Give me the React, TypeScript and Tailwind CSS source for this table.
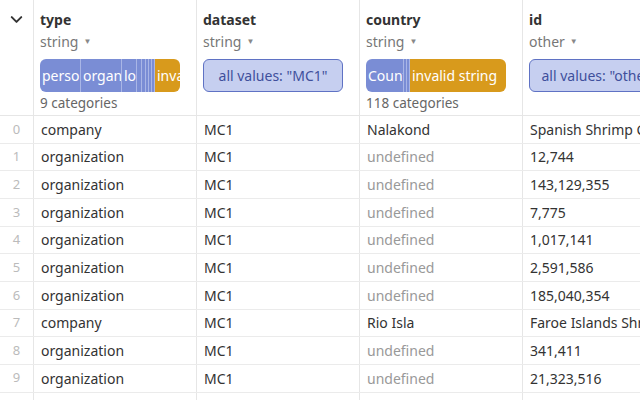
import { ChevronDown } from "lucide-react";

type Seg = { label: string; w: number; kind: "cat" | "invalid" | "slice" };

const columns: {
  name: string;
  type: string;
  summary: "bar" | "single";
  segs?: Seg[];
  single?: string;
  foot?: string;
}[] = [
  {
    name: "type",
    type: "string",
    summary: "bar",
    segs: [
      { label: "person", w: 41, kind: "cat" },
      { label: "organization", w: 41, kind: "cat" },
      { label: "location", w: 15, kind: "cat" },
      { label: "", w: 5, kind: "slice" },
      { label: "", w: 4, kind: "slice" },
      { label: "", w: 3, kind: "slice" },
      { label: "", w: 3, kind: "slice" },
      { label: "", w: 3, kind: "slice" },
      { label: "invalid", w: 25, kind: "invalid" },
    ],
    foot: "9 categories",
  },
  { name: "dataset", type: "string", summary: "single", single: 'all values: "MC1"' },
  {
    name: "country",
    type: "string",
    summary: "bar",
    segs: [
      { label: "Country", w: 38, kind: "cat" },
      { label: "", w: 3, kind: "slice" },
      { label: "", w: 3, kind: "slice" },
      { label: "invalid string", w: 96, kind: "invalid" },
    ],
    foot: "118 categories",
  },
  { name: "id", type: "other", summary: "single", single: 'all values: "other"' },
];

const rows: [string, string, string | null, string][] = [
  ["company", "MC1", "Nalakond", "Spanish Shrimp Carriers"],
  ["organization", "MC1", null, "12,744"],
  ["organization", "MC1", null, "143,129,355"],
  ["organization", "MC1", null, "7,775"],
  ["organization", "MC1", null, "1,017,141"],
  ["organization", "MC1", null, "2,591,586"],
  ["organization", "MC1", null, "185,040,354"],
  ["company", "MC1", "Rio Isla", "Faroe Islands Shrimp"],
  ["organization", "MC1", null, "341,411"],
  ["organization", "MC1", null, "21,323,516"],
  ["organization", "MC1", null, "3,102"],
];

function Bar({ segs }: { segs: Seg[] }) {
  return (
    <div className="flex h-[33px] w-[140px] overflow-hidden rounded-[6px]">
      {segs.map((s, i) => (
        <div
          key={i}
          style={{ width: s.w }}
          className={
            "flex shrink-0 items-center overflow-hidden whitespace-nowrap border-r border-[#a9b6e6] pl-[2px] text-[14px] text-white last:border-r-0 " +
            (s.kind === "invalid" ? "bg-[#d89a1c]" : "bg-[#7a8dd5]")
          }
        >
          {s.label}
        </div>
      ))}
    </div>
  );
}

export default function App() {
  return (
    <div
      className="h-[400px] w-[640px] overflow-hidden bg-white text-[14px] text-[#333]"
      style={{ fontFamily: '"Noto Sans", "Open Sans", sans-serif' }}
    >
      <div className="flex h-[116px] border-b border-[#e6e6e6]">
        <div className="flex w-[34px] shrink-0 justify-center border-r border-[#e6e6e6] pt-[10px]">
          <ChevronDown size={19} strokeWidth={2.5} className="text-[#333]" />
        </div>
        {columns.map((c) => (
          <div
            key={c.name}
            className="w-[163px] shrink-0 border-r border-[#e6e6e6] px-[6px] pt-[9px]"
          >
            <div className="h-[21px] font-bold leading-[21px]">{c.name}</div>
            <div className="flex h-[22px] items-center gap-[5px] text-[#777]">
              {c.type}
              <span className="text-[8px] text-[#888]">▼</span>
            </div>
            <div className="mt-[7px]">
              {c.summary === "bar" && c.segs ? (
                <Bar segs={c.segs} />
              ) : (
                <div className="flex h-[33px] w-[140px] items-center justify-center whitespace-nowrap rounded-[6px] border border-[#5f72c4] bg-[#c6cff0] px-1 text-[#3f4f9c]">
                  {c.single}
                </div>
              )}
            </div>
            {c.foot && (
              <div className="mt-[1px] text-[13.5px] leading-[20px] text-[#666]">{c.foot}</div>
            )}
          </div>
        ))}
      </div>
      {rows.map((r, i) => (
        <div key={i} className="flex h-[27.67px] border-b border-[#ebebeb]">
          <div className="flex w-[34px] shrink-0 items-center justify-center border-r border-[#e6e6e6] text-[13px] text-[#bbb]">
            {i}
          </div>
          {r.map((v, j) => (
            <div
              key={j}
              className={
                "flex w-[163px] shrink-0 items-center overflow-hidden whitespace-nowrap border-r border-[#e6e6e6] px-[7px] " +
                (v === null ? "text-[#999]" : "text-[#333]")
              }
            >
              {v === null ? "undefined" : v}
            </div>
          ))}
        </div>
      ))}
    </div>
  );
}
